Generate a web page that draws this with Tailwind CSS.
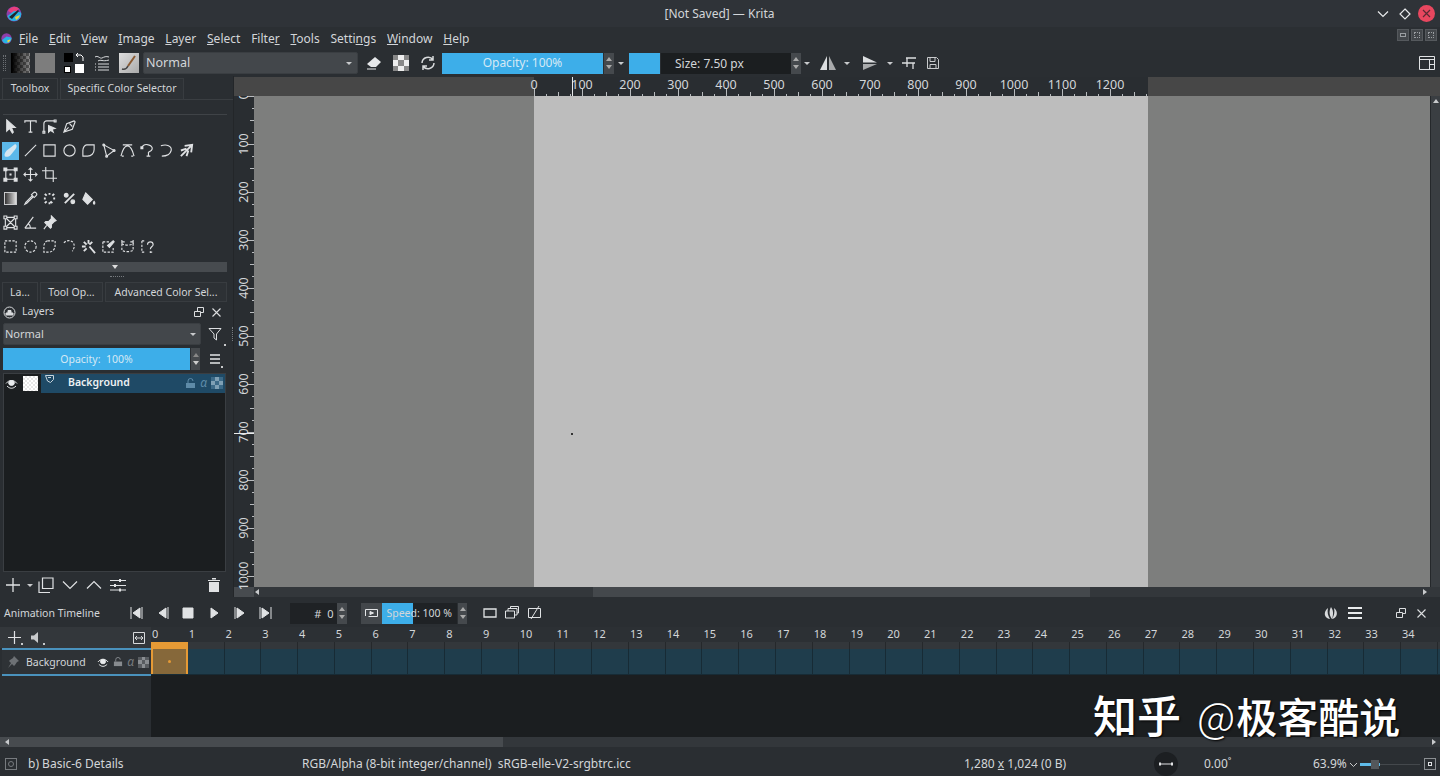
<!DOCTYPE html>
<html lang="en">
  <head>
    <meta charset="UTF-8" />
    <title>[Not Saved] — Krita</title>
    <script src="https://cdn.jsdelivr.net/npm/@tailwindcss/browser@4"></script>
  </head>
  <body class="h-screen w-[1440px] overflow-hidden flex flex-col bg-[#2a2e32] text-[#d3d6d9] font-['Noto_Sans','Noto_Sans_CJK_SC',sans-serif] relative">
    <!-- title bar -->
    <header class="h-[27px] shrink-0 bg-[#2f3338] flex items-center relative">
      <svg class="ml-[6px] size-[16px]" viewBox="0 0 16 16">
        <circle cx="8" cy="8" r="7.5" fill="#8e3fa8" />
        <path d="M2 5a7 7 0 0 1 11-2.500L8 8z" fill="#e83f7d" />
        <path d="M1.500 10 8 5l7 1.500A7 7 0 0 1 8 15a7 7 0 0 1-6.500-5z" fill="#27b4e4" />
        <path d="M3 11 12 4l1 1-7 8z" fill="#20262b" />
        <path d="M9 11l5-2a7 7 0 0 1-4 5z" fill="#f2d53c" />
      </svg>
      <div class="absolute inset-x-0 text-center text-[12px] leading-[28px] pr-[1px]">[Not Saved] — Krita</div>
      <div class="ml-auto flex items-center">
        <svg class="size-[12px]" viewBox="0 0 12 12" fill="none" stroke="#e8eaec" stroke-width="1.200"><path d="M1 3.500 6 8.500 11 3.500" /></svg>
        <svg class="ml-[10px] size-[12px]" viewBox="0 0 12 12" fill="none" stroke="#e8eaec" stroke-width="1.200"><path d="M6 1 11 6 6 11 1 6z" /></svg>
        <div class="ml-[7px] mr-[5px] size-[17px] rounded-full bg-[#e8475f] flex items-center justify-center">
          <svg class="size-[9px]" viewBox="0 0 9 9" stroke="#5b2a33" stroke-width="1.200"><path d="M1 1 8 8M8 1 1 8" /></svg>
        </div>
      </div>
    </header>

    <!-- menu bar -->
    <nav class="h-[23px] shrink-0 bg-[#2b2f33] flex items-center text-[12px] relative">
      <svg class="ml-[1px] size-[11px]" viewBox="0 0 16 16">
        <circle cx="8" cy="8" r="7.500" fill="#8e3fa8" />
        <path d="M1.500 10 8 5l7 1.500A7 7 0 0 1 8 15a7 7 0 0 1-6.500-5z" fill="#27b4e4" />
        <path d="M9 11l5-2a7 7 0 0 1-4 5z" fill="#f2d53c" />
      </svg>
      <div class="ml-[7px] flex gap-[10.800px]">
        <span><u>F</u>ile</span><span><u>E</u>dit</span><span><u>V</u>iew</span><span><u>I</u>mage</span><span><u>L</u>ayer</span><span><u>S</u>elect</span><span>Filte<u>r</u></span><span><u>T</u>ools</span><span>Setti<u>n</u>gs</span><span><u>W</u>indow</span><span><u>H</u>elp</span>
      </div>
      <div class="absolute right-[3px] top-[2px] flex gap-[2px]">
        <div class="size-[12px] bg-[#43474b] border border-[#55595d] flex items-center justify-center"><div class="w-[6px] h-[4px] border border-[#9a9ea2]"></div></div>
        <div class="size-[12px] bg-[#43474b] border border-[#55595d] flex items-center justify-center"><div class="size-[6px] border border-dotted border-[#9a9ea2]"></div></div>
        <div class="size-[12px] bg-[#43474b] border border-[#55595d] flex items-center justify-center"><div class="size-[6px] border border-dotted border-[#9a9ea2]"></div></div>
      </div>
    </nav>

    <!-- brush toolbar -->
    <div class="h-[26px] shrink-0 bg-[#2a2e32] flex items-center text-[12px]">
      <div class="ml-[3px] w-[3px] h-[16px] border-x border-dotted border-[#6b6f73]"></div>
      <div class="ml-[5px] w-[19px] h-[20px] bg-[linear-gradient(90deg,#000_5%,transparent),repeating-conic-gradient(#555_0_25%,#8a8a8a_0_50%)] bg-[length:auto,6px_6px]"></div>
      <div class="ml-[5px] w-[20px] h-[20px] bg-[#7d7d7d]"></div>
      <div class="ml-[9px] relative w-[20px] h-[20px]">
        <div class="absolute left-0 top-0 size-[9px] bg-black"></div>
        <div class="absolute right-0 bottom-0 size-[9px] bg-white"></div>
        <div class="absolute left-0 bottom-0 size-[7px] bg-white border border-black"></div>
        <svg class="absolute right-0 top-0 size-[9px]" viewBox="0 0 9 9" fill="none" stroke="#fff"><path d="M1 2h5l2 2v4M3 0 1 2l2 2" /></svg>
      </div>
      <svg class="ml-[10px] size-[16px]" viewBox="0 0 16 16" fill="none" stroke="#d8dadc"><path d="M1 2c3-2 5 2 7 1s4-2 7-1M4 6c3-2 4 1 11-1M1 9h1M4 9h11M1 12h1M4 12h11M1 15h1M4 15h11" /></svg>
      <div class="ml-[9px] w-[20px] h-[20px] bg-[linear-gradient(135deg,#ddd,#aaa)] flex items-center justify-center">
        <svg class="size-[18px]" viewBox="0 0 18 18" fill="none"><path d="M15 2 8 12" stroke="#8a5a32" stroke-width="2" /><path d="M2 15c3 1 5-1 6-3" stroke="#444" stroke-width="1.500" /></svg>
      </div>
      <div class="ml-[4px] w-[215px] h-[22px] rounded-[2px] bg-[#43474b] border border-[#3a3e42] flex items-center px-[2px] text-[12.500px]">
        <span>Normal</span>
        <svg class="ml-auto mr-[2px] size-[8px]" viewBox="0 0 8 8" fill="#c8cacc"><path d="M1 3h6L4 6z" /></svg>
      </div>
      <svg class="ml-[8px] size-[16px]" viewBox="0 0 16 16" fill="#e6e8ea"><path d="M9 2 15 7 10 12H5L1 9z" /><path d="M1 14h9" stroke="#e6e8ea" /></svg>
      <div class="ml-[11px] size-[16px] grid grid-cols-3 grid-rows-3">
        <i class="bg-[#888]"></i><i class="bg-[#eee]"></i><i class="bg-[#888]"></i><i class="bg-[#eee]"></i><i class="bg-[#888]"></i><i class="bg-[#eee]"></i><i class="bg-[#888]"></i><i class="bg-[#eee]"></i><i class="bg-[#888]"></i>
      </div>
      <svg class="ml-[11px] size-[16px]" viewBox="0 0 16 16" fill="none" stroke="#d8dadc" stroke-width="1.500"><path d="M2 8a6 6 0 0 1 11-3M14 8a6 6 0 0 1-11 3M13 1v4H9M3 15v-4h4" /></svg>
      <div class="ml-[6px] w-[161px] h-[21px] bg-[#3daee9] flex items-center justify-center text-[#d5e9f5]">Opacity: 100%</div>
      <div class="ml-[1px] w-[10px] h-[21px] bg-[#45494d] flex flex-col justify-center items-center gap-[2px]">
        <svg class="size-[6px]" viewBox="0 0 6 6" fill="#aaa"><path d="M3 1 6 5H0z" /></svg>
        <svg class="size-[6px]" viewBox="0 0 6 6" fill="#aaa"><path d="M3 5 6 1H0z" /></svg>
      </div>
      <svg class="ml-[4px] size-[6px]" viewBox="0 0 6 6" fill="#c8cacc"><path d="M0 2h6L3 5z" /></svg>
      <div class="ml-[5px] w-[31px] h-[21px] bg-[#3daee9]"></div>
      <div class="ml-[1px] w-[130px] h-[21px] bg-[#1b1e20] pl-[14px] leading-[21px]">Size: 7.50 px</div>
      <div class="w-[10px] h-[21px] bg-[#45494d] flex flex-col justify-center items-center gap-[2px]">
        <svg class="size-[6px]" viewBox="0 0 6 6" fill="#aaa"><path d="M3 1 6 5H0z" /></svg>
        <svg class="size-[6px]" viewBox="0 0 6 6" fill="#aaa"><path d="M3 5 6 1H0z" /></svg>
      </div>
      <svg class="ml-[3px] size-[6px]" viewBox="0 0 6 6" fill="#c8cacc"><path d="M0 2h6L3 5z" /></svg>
      <svg class="ml-[10px] size-[16px]" viewBox="0 0 16 16" fill="#dcdee0"><path d="M7 1v14H0z" /><path d="M9 1v14h7z" fill="#a8aaac" /></svg>
      <svg class="ml-[8px] size-[6px]" viewBox="0 0 6 6" fill="#c8cacc"><path d="M0 2h6L3 5z" /></svg>
      <svg class="ml-[12px] size-[16px]" viewBox="0 0 16 16" fill="#dcdee0"><path d="M1 1v6.500h14z" /><path d="M1 9v6l14-6z" fill="#a8aaac" /></svg>
      <svg class="ml-[9px] size-[6px]" viewBox="0 0 6 6" fill="#c8cacc"><path d="M0 2h6L3 5z" /></svg>
      <svg class="ml-[8px] size-[16px]" viewBox="0 0 16 16" fill="none" stroke="#dcdee0" stroke-width="1.300"><path d="M5 3h10M6 3v9M1 8h13M12 8v6" /></svg>
      <svg class="ml-[9px] size-[14px]" viewBox="0 0 14 14" fill="none" stroke="#c8cacc"><path d="M1.500 1.500h9l2 2v9h-11zM4 1.500v4h5v-4M4 12.500v-4h6v4" /></svg>
      <svg class="ml-auto mr-[5px] size-[16px]" viewBox="0 0 16 16" fill="none" stroke="#e0e2e4"><path d="M.5 1.500h15v13H.5zM.5 4.500h15M10.500 4.500v10M10.500 9.500h5" /></svg>
    </div>

    <!-- middle: dockers + canvas -->
    <main class="flex-1 min-h-0 flex">
      <aside class="w-[234px] shrink-0 flex flex-col text-[10.500px] border-r border-[#232629]">
        <div class="h-[24px] pt-[2px] pl-[2px] flex border-b border-[#3a3e42]">
          <div class="w-[56px] border border-b-0 border-[#383c40] text-center leading-[18px]">Toolbox</div>
          <div class="ml-[2px] w-[124px] h-[22px] border border-[#383c40] bg-[#2d3135] text-center leading-[18px]">Specific Color Selector</div>
        </div>
        <div class="mx-[3px] h-[15px] w-[224px] border-b border-[#3f4347]"></div>
        <div id="toolbox" class="h-[147px] ml-[1px] flex flex-col"></div>
        <div class="mx-[2px] w-[225px] h-[10px] bg-[#474b4f] flex items-center justify-center">
          <svg class="size-[6px]" viewBox="0 0 6 6" fill="#ddd"><path d="M0 1h6L3 5z" /></svg>
        </div>
        <div class="h-[10px] flex justify-center items-center"><div class="w-[14px] border-t border-dotted border-[#777b7f]"></div></div>

        <div class="h-[20px] pl-[2px] flex">
          <div class="w-[36px] border border-b-0 border-[#383c40] text-center leading-[18px]">La...</div>
          <div class="ml-[2px] w-[63px] border border-[#383c40] bg-[#2d3135] text-center leading-[18px]">Tool Op...</div>
          <div class="ml-[2px] w-[122px] border border-[#383c40] bg-[#2d3135] text-center leading-[18px]">Advanced Color Sel...</div>
        </div>
        <div class="h-[20px] flex items-center pt-[1px]">
          <svg class="ml-[3px] size-[13px]" viewBox="0 0 13 13" fill="none" stroke="#d8dadc"><circle cx="6.500" cy="6.500" r="5.500" /><path d="M3 9h7V7H3zM5 7V4.500h3V7" fill="#d8dadc" /></svg>
          <span class="ml-[6px] text-[10.500px]">Layers</span>
          <svg class="ml-auto size-[12px]" viewBox="0 0 12 12" fill="none" stroke="#dcdee0"><path d="M1.500 5.500h6v5h-6zM4.500 5.500v-4h6v5h-3" /></svg>
          <svg class="ml-[6px] mr-[11px] size-[11px]" viewBox="0 0 11 11" stroke="#dcdee0" stroke-width="1.100"><path d="M1.500 1.500 9.500 9.500M9.500 1.500 1.500 9.500" /></svg>
        </div>
        <div class="mt-[1px] h-[23px] flex items-center">
          <div class="ml-[3px] w-[198px] h-[22px] rounded-[2px] bg-[#43474b] border border-[#3a3e42] flex items-center px-[1px] text-[11px]">
            <span>Normal</span>
            <svg class="ml-auto mr-[2px] size-[8px]" viewBox="0 0 8 8" fill="#c8cacc"><path d="M1 3h6L4 6z" /></svg>
          </div>
          <svg class="ml-[7px] size-[15px]" viewBox="0 0 15 15" fill="none" stroke="#dcdee0"><path d="M1 1.500h12L8.500 7v6L6 11V7z" /></svg>
          <div class="ml-[1px] self-end size-[2px] bg-[#c8cacc]"></div>
          <div class="ml-[6px] h-[14px] border-l border-dotted border-[#777b7f]"></div>
        </div>
        <div class="mt-[2px] h-[22px] flex items-center">
          <div class="ml-[3px] w-[187px] h-[22px] bg-[#3daee9] text-center leading-[22px] text-[#d5e9f5]">Opacity:&nbsp; 100%</div>
          <div class="ml-[1px] w-[9px] h-[22px] bg-[#45494d] flex flex-col justify-center items-center gap-[2px]">
            <svg class="size-[6px]" viewBox="0 0 6 6" fill="#888"><path d="M3 1 6 5H0z" /></svg>
            <svg class="size-[6px]" viewBox="0 0 6 6" fill="#ccc"><path d="M3 5 6 1H0z" /></svg>
          </div>
          <svg class="ml-[9px] size-[12px]" viewBox="0 0 12 12" stroke="#e4e6e8" stroke-width="1.500"><path d="M1 2h10M1 6h10M1 10h10" /></svg>
          <div class="self-end mb-[2px] size-[2px] bg-[#c8cacc]"></div>
        </div>
        <div class="mt-[3px] ml-[3px] w-[223px] h-[200px] bg-[#1b1e20] border border-[#3a3e42]">
          <div class="h-[19px] bg-[#1f4a66] flex items-center">
            <div class="w-[37px] h-full bg-[#1b1e20] flex items-center">
              <svg class="ml-[1px] size-[13px]" viewBox="0 0 13 13" fill="none" stroke="#e8eaec"><path d="M1 6.500c3-4 8-4 11 0" /><ellipse cx="6.500" cy="6" rx="2.800" ry="2.400" fill="#e8eaec" /><path d="M2 9c3 3 6 3 9 0" /></svg>
              <div class="ml-[5px] size-[15px] bg-[repeating-conic-gradient(#e6e6e6_0_25%,#fff_0_50%)] bg-[length:4px_4px]"></div>
            </div>
            <svg class="ml-[3px] size-[11px] self-start" viewBox="0 0 11 11" fill="none" stroke="#c8d4dc"><path d="M1.500 1.500h8v4l-3 3-3-1.500zM4 3.500h3" /></svg>
            <span class="ml-[13px] text-[10.500px] font-semibold text-[#eef1f3]">Background</span>
            <svg class="ml-auto size-[11px]" viewBox="0 0 11 11" fill="#5e8ba8"><path d="M1 5h9v5H1z" /><path d="M3 5V3a2.500 2.500 0 0 1 5 0" fill="none" stroke="#5e8ba8" /></svg>
            <span class="ml-[4px] text-[12px] italic text-[#5e8ba8] leading-none">α</span>
            <div class="ml-[4px] mr-[2px] size-[12px] grid grid-cols-3 grid-rows-3 bg-[#3c6a88]"><i></i><i class="bg-[#7fa0b5]"></i><i></i><i class="bg-[#7fa0b5]"></i><i></i><i class="bg-[#7fa0b5]"></i><i></i><i class="bg-[#7fa0b5]"></i><i></i></div>
          </div>
        </div>
        <div class="h-[24px] flex items-center mt-[1px]">
          <svg class="ml-[5px] size-[16px]" viewBox="0 0 16 16" stroke="#e0e2e4" stroke-width="1.300"><path d="M8 1v14M1 8h14" /></svg>
          <svg class="ml-[6px] size-[6px]" viewBox="0 0 6 6" fill="#c8cacc"><path d="M0 2h6L3 5z" /></svg>
          <svg class="ml-[5px] size-[16px]" viewBox="0 0 16 16" fill="none" stroke="#e0e2e4" stroke-width="1.200"><path d="M1 4.500v11h11M4.500 1h10.500v10.500H4.500z" /></svg>
          <svg class="ml-[8px] size-[16px]" viewBox="0 0 16 16" fill="none" stroke="#e0e2e4" stroke-width="1.200"><path d="M1 4.500 8 11.500 15 4.500" /></svg>
          <svg class="ml-[8px] size-[16px]" viewBox="0 0 16 16" fill="none" stroke="#e0e2e4" stroke-width="1.200"><path d="M1 11.500 8 4.500 15 11.500" /></svg>
          <svg class="ml-[8px] size-[16px]" viewBox="0 0 16 16" fill="none" stroke="#e0e2e4"><path d="M0 3.500h16M0 8.500h16M0 13h16" /><path d="M10 2v3M5 7v3M10 11.500v3" stroke-width="2" /></svg>
          <svg class="ml-auto mr-[11px] size-[16px]" viewBox="0 0 16 16" fill="#e0e2e4"><path d="M3 5h10v10H3zM2 3h12v1H2zM6 1h4v1.500H6z" /></svg>
        </div>
      </aside>

      <section class="flex-1 min-w-0 flex flex-col">
        <div class="h-[19px] mt-[1px] shrink-0 bg-[#474747] flex pl-[300px] relative z-10">
          <div id="ruler-h" class="relative w-[614px] h-full bg-[#292d31] text-[12.500px]"></div>
        </div>
        <div class="flex-1 min-h-0 flex">
          <div id="ruler-v" class="relative z-[5] w-[20px] shrink-0 bg-[#292d31] text-[12.500px]"></div>
          <div class="flex-1 bg-[#7d7e7d] pl-[280px] relative">
            <div class="w-[614px] h-full bg-[#bdbdbd] relative">
              <div class="absolute left-[37px] top-[337px] size-[2px] bg-[#333]"></div>
            </div>
          </div>
          <div class="w-[10px] shrink-0 bg-[#3a3e42] border-l border-[#25282b] flex justify-center pt-[2px]">
            <svg class="size-[6px]" viewBox="0 0 6 6" fill="#c8cacc"><path d="M3 1 6 5H0z" /></svg>
          </div>
        </div>
        <div class="h-[10px] shrink-0 bg-[#33373b] flex items-center">
          <div class="w-[20px] h-full bg-[#474b4f] flex items-center justify-end">
            <svg class="size-[6px] -mr-[6px]" viewBox="0 0 6 6" fill="#c8cacc"><path d="M1 3 5 0v6z" /></svg>
          </div>
          <div class="ml-[339px] w-[497px] h-full bg-[#44484c]"></div>
          <svg class="ml-auto mr-[12px] size-[6px]" viewBox="0 0 6 6" fill="#c8cacc"><path d="M5 3 1 0v6z" /></svg>
        </div>
      </section>
    </main>

    <!-- animation timeline -->
    <section class="h-[155px] shrink-0 flex flex-col relative text-[10.500px]">
      <div class="h-[30px] flex items-center pt-[2px]">
        <span class="ml-[4px] w-[125px] pt-[1px]">Animation Timeline</span>
        <div id="transport" class="flex items-center gap-[9.700px]"></div>
        <div class="ml-[17px] w-[47px] h-[21px] bg-[#1f2225] text-right pr-[4px] leading-[21px] text-[11px]">#&nbsp; 0</div>
        <div class="w-[10px] h-[21px] bg-[#45494d] flex flex-col justify-center items-center gap-[2px]">
          <svg class="size-[6px]" viewBox="0 0 6 6" fill="#aaa"><path d="M3 1 6 5H0z" /></svg>
          <svg class="size-[6px]" viewBox="0 0 6 6" fill="#aaa"><path d="M3 5 6 1H0z" /></svg>
        </div>
        <div class="ml-[14px] w-[21px] h-[21px] bg-[#43474b] flex items-center justify-center">
          <svg class="size-[15px]" viewBox="0 0 15 15" fill="none" stroke="#e4e6e8"><path d="M1.500 3.500h12v7h-9M1.500 3.500V10" /><path d="M6 5.500 9.500 7 6 8.500z" fill="#e4e6e8" /></svg>
        </div>
        <div class="w-[75px] h-[21px] bg-[#1f2225] relative leading-[21px]">
          <div class="absolute inset-y-0 left-0 w-[31px] bg-[#3daee9]"></div>
          <span class="relative pl-[4px] whitespace-nowrap">Speed: 100 %</span>
        </div>
        <div class="ml-[1px] w-[9px] h-[21px] bg-[#45494d] flex flex-col justify-center items-center gap-[2px]">
          <svg class="size-[6px]" viewBox="0 0 6 6" fill="#aaa"><path d="M3 1 6 5H0z" /></svg>
          <svg class="size-[6px]" viewBox="0 0 6 6" fill="#aaa"><path d="M3 5 6 1H0z" /></svg>
        </div>
        <svg class="ml-[16px] size-[14px]" viewBox="0 0 14 14" fill="none" stroke="#e0e2e4" stroke-width="1.300"><path d="M1 3h12v8H1z" /></svg>
        <svg class="ml-[7px] size-[16px]" viewBox="0 0 16 16" fill="none" stroke="#e0e2e4"><path d="M1.500 6h9v7h-9zM4 6V3.500h9V10h-2.500M6.500 3.500V1.500h8V8H13" /></svg>
        <svg class="ml-[7px] size-[16px]" viewBox="0 0 16 16" fill="none" stroke="#e0e2e4"><path d="M1.500 3.500h12v9h-12zM4 14 12 1" /></svg>
        <svg class="ml-auto size-[16px]" viewBox="0 0 16 16" fill="#d8dadc"><path d="M8 2c2 3 3 6 1 12-3-4-3-8-1-12zM5 3c-1 4 0 8 2 11-6-1-7-7-2-11zM11 3c5 4 3 10-2 11 2-3 3-7 2-11z" /></svg>
        <svg class="ml-[8px] size-[16px]" viewBox="0 0 16 16" stroke="#e8eaec" stroke-width="1.800"><path d="M1 3h14M1 8h14M1 13h14" /></svg>
        <svg class="ml-[32px] size-[12px]" viewBox="0 0 12 12" fill="none" stroke="#dcdee0"><path d="M1.500 5.500h6v5h-6zM4.500 5.500v-4h6v5h-3" /></svg>
        <svg class="ml-[9px] mr-[13px] size-[11px]" viewBox="0 0 11 11" stroke="#dcdee0" stroke-width="1.100"><path d="M1.500 1.500 9.500 9.500M9.500 1.500 1.500 9.500" /></svg>
      </div>

      <div class="flex h-[110px]">
        <div class="w-[151px] shrink-0 flex flex-col">
          <div class="h-[21px] bg-[#33373b] flex items-center">
            <svg class="ml-[8px] size-[13px]" viewBox="0 0 13 13" stroke="#e0e2e4" stroke-width="1.200"><path d="M6.500 0v13M0 6.500h13" /></svg>
            <div class="self-end mb-[3px] size-[2px] bg-[#c8cacc]"></div>
            <svg class="ml-[7px] size-[13px]" viewBox="0 0 13 13" fill="#c8cacc"><path d="M1 4.500h3L8 1v11L4 8.500H1z" /></svg>
            <div class="self-end mb-[3px] size-[2px] bg-[#c8cacc]"></div>
            <svg class="ml-auto mr-[5px] size-[14px]" viewBox="0 0 14 14" fill="none" stroke="#d8dadc"><path d="M1.500 1.500h11v11h-11zM3 7h8M5 5 3 7l2 2M9 5l2 2-2 2" /></svg>
          </div>
          <div class="h-[28px] ml-[2px] border-y-2 border-[#4a92bd] bg-[#2e3236] flex items-center">
            <svg class="ml-[4px] size-[14px]" viewBox="0 0 14 14" fill="#6d7175"><path d="M8 1l5 5-2 1-2 3-1 1-2-2-4 4 3-5-2-2 1-1 3-2z" /></svg>
            <span class="ml-[6px] pt-[1px]">Background</span>
            <svg class="ml-auto size-[12px]" viewBox="0 0 13 13" fill="none" stroke="#e8eaec"><path d="M1 6.500c3-4 8-4 11 0" /><ellipse cx="6.500" cy="6" rx="2.800" ry="2.400" fill="#e8eaec" /><path d="M2 9c3 3 6 3 9 0" /></svg>
            <svg class="ml-[4px] size-[10px]" viewBox="0 0 11 11" fill="#878b8f"><path d="M1 5h9v5H1z" /><path d="M3 5V3a2.500 2.500 0 0 1 5 0" fill="none" stroke="#878b8f" /></svg>
            <span class="ml-[4px] text-[12px] italic text-[#777b7f] leading-none">α</span>
            <div class="ml-[4px] mr-[2px] size-[11px] grid grid-cols-3 grid-rows-3 bg-[#585c60]"><i></i><i class="bg-[#8a8e92]"></i><i></i><i class="bg-[#8a8e92]"></i><i></i><i class="bg-[#8a8e92]"></i><i></i><i class="bg-[#8a8e92]"></i><i></i></div>
          </div>
          <div class="flex-1"></div>
        </div>
        <div class="flex-1 min-w-0 bg-[#1b1e20] flex flex-col overflow-hidden">
          <div id="frame-nums" class="h-[15px] bg-[#2c3034] flex"></div>
          <div id="frame-sub" class="h-[7px] bg-[#33373b] flex"></div>
          <div id="frame-track" class="h-[26px] bg-[#1f3d4c] flex border-b border-[#172b35]"></div>
        </div>
      </div>

      <div class="h-[10px] bg-[#33373b] flex items-center">
        <div class="w-[503px] h-full bg-[#474b4f] flex items-center pl-[4px]">
          <svg class="size-[6px]" viewBox="0 0 6 6" fill="#c8cacc"><path d="M1 3 5 0v6z" /></svg>
        </div>
        <svg class="ml-auto mr-[3px] size-[6px]" viewBox="0 0 6 6" fill="#c8cacc"><path d="M5 3 1 0v6z" /></svg>
      </div>
      <div class="h-[5px]"></div>
    </section>

    <!-- status bar -->
    <footer class="h-[24px] shrink-0 flex items-center text-[12px]">
      <div class="ml-[5px] size-[12px] border border-[#777b7f] flex items-center justify-center"><div class="size-[6px] rounded-full border border-[#777b7f]"></div></div>
      <span class="ml-[11px] w-[274px]">b) Basic-6 Details</span>
      <span class="whitespace-nowrap">RGB/Alpha (8-bit integer/channel)&nbsp; sRGB-elle-V2-srgbtrc.icc</span>
      <span class="absolute left-[964px] whitespace-nowrap">1,280 <u>x</u> 1,024 (0 B)</span>
      <div class="absolute left-[1154px] size-[24px] rounded-full bg-[#1c1f22] flex items-center justify-center">
        <svg class="size-[14px]" viewBox="0 0 14 14" stroke="#e0e2e4"><path d="M1 7h12" /><path d="M0 7h2M12 7h2" stroke-width="3" /></svg>
      </div>
      <span class="absolute left-[1204px]">0.00˚</span>
      <span class="absolute left-[1313px]">63.9%</span>
      <svg class="absolute left-[1349px] size-[9px]" viewBox="0 0 9 9" fill="none" stroke="#c8cacc"><path d="M1 3 4.500 6.500 8 3" /></svg>
      <div class="absolute left-[1360px] w-[20px] h-[3px] bg-[#5fbbe9]"></div>
      <div class="absolute left-[1371px] w-[8px] h-[9px] bg-[#53575b]"></div>
      <div class="absolute left-[1380px] w-[40px] h-[1px] bg-[#44484c]"></div>
      <div class="absolute left-[1424px] size-[12px] border border-[#8a8e92] flex items-center justify-center"><div class="size-[4px] border border-[#e0e2e4]"></div></div>
    </footer>

    <!-- watermark over the timeline -->
    <div class="absolute left-[1093px] top-[687px] leading-[54px] text-white whitespace-nowrap [text-shadow:1px_1px_2px_#000] font-['Noto_Sans_CJK_SC',sans-serif]">
      <span class="text-[44px] font-medium">知乎</span><span class="ml-[16px] text-[42px] font-light">@</span><span class="ml-[1px] text-[41px] font-medium">极客酷说</span>
    </div>

    <script>
      // tool icons, one row per group of the toolbox
      const s = (inner) => `<svg class="size-[15px]" viewBox="0 0 16 16" fill="none" stroke="#dfe1e3" stroke-width="1.200">${inner}</svg>`;
      const dashed = (inner) => s(`<g stroke-dasharray="2.500 1.500">${inner}</g>`);
      const toolRows = [
        [
          s('<path d="M4 1v12l3-3 3 5 1-1-2-5h4z" fill="#dfe1e3"/>'),
          s('<path d="M2 4V2h12v2M8 2v12M6 14h4"/>'),
          s('<path d="M2 13V5a3 3 0 0 1 3-3h8"/><path d="M7 7v7l2-2 3 2-1-3 3-1z" fill="#dfe1e3"/><path d="M1 13h2v2H1zM13 1h2v2h-2z"/>'),
          s('<path d="M13 2 5 5 2 14l9-3 3-8zM2 14l5-5M8 5l3 3"/>')
        ],
        [
          `<div class="w-[17px] h-[18px] -ml-[1px] bg-[#5bb8ea] flex items-center justify-center"><svg class="size-[15px]" viewBox="0 0 16 16" fill="#d5e6f0"><path d="M13 1c2 1 2 3 0 6l-5 6c-2 2-5 2-6 1s0-4 2-6z"/></svg></div>`,
          s('<path d="M2 14 14 2"/>'),
          s('<path d="M2 2h12v12H2z"/>'),
          s('<circle cx="8" cy="8" r="6"/>'),
          s('<path d="M6 2h8v5c0 4-3 7-7 7H2V8c0-3 2-6 4-6z"/>'),
          s('<path d="M3 2 14 8 6 14 3 2zM3 2v0"/><circle cx="3" cy="2" r="1"/><circle cx="14" cy="8" r="1"/><circle cx="6" cy="14" r="1"/>'),
          s('<path d="M1 14C3 6 5 3 8 3s5 3 7 11M3 2h10M2 14h2M12 14h2"/>'),
          s('<path d="M1 6C3 2 6 1 9 2c4 1 5 4 3 6l-3 2v4M7 14h4M1 4h2v2H1z"/>'),
          s('<path d="M2 3c6-2 12 0 11 5-1 4-5 6-10 6"/>'),
          s('<path d="M2 14 14 2M6 3l8-1-1 8M2 8l6-2M8 14l2-6" stroke-width="2"/>')
        ],
        [
          s('<path d="M3 3h10v10H3z"/><path d="M1 1h3v3H1zM12 1h3v3h-3zM1 12h3v3H1zM12 12h3v3h-3zM7.500 7.500h1v1h-1z" fill="#dfe1e3"/>'),
          s('<path d="M8 1v14M1 8h14M6 3l2-2 2 2M6 13l2 2 2-2M3 6 1 8l2 2M13 6l2 2-2 2"/>'),
          s('<path d="M4 0v12h12M0 4h12v12"/>')
        ],
        [
          `<div class="size-[13px] border border-[#c8cacc] bg-[linear-gradient(90deg,#333,#ddd)]"></div>`,
          s('<path d="M14 2c-1-1-2-1-3 0L9 4 12 7l2-2c1-1 1-2 0-3zM10 5 3 12l-1 2 2-1 7-7z"/>'),
          s('<path d="M8 2v2M13 3l-2 2M14 8h-2M4 8H2M3 13l2-2M11 13l-2-2M8 14v-2M3 3l2 2" stroke-width="2"/>'),
          s('<path d="M3 13 13 3" stroke-width="2"/><circle cx="4.500" cy="4.500" r="2" fill="#dfe1e3"/><circle cx="11.500" cy="11.500" r="2" fill="#dfe1e3"/>'),
          s('<path d="M5 2 12 9 7 14 2 9zM3 8h8" fill="#dfe1e3"/><path d="M14 11c1 1 1 3 0 3s-1-2 0-3z" fill="#dfe1e3"/>')
        ],
        [
          s('<path d="M1 1h3v3H1zM12 1h3v3h-3zM1 12h3v3H1zM12 12h3v3h-3zM4 4l8 8M12 4l-8 8M4 2.500h8M4 13.500h8M2.500 4v8M13.500 4v8"/>'),
          s('<path d="M2 14 11 2M2 14h12M8 14c0-2-1-4-2.500-5"/>'),
          s('<path d="M10 1l5 5-2 1-3 3v3l-1 1-6-6 1-1h3l3-3z" fill="#dfe1e3"/><path d="M5 11l-3 4"/>')
        ],
        [
          dashed('<path d="M2 2h12v12H2z"/>'),
          dashed('<circle cx="8" cy="8" r="6"/>'),
          dashed('<path d="M6 2h8v5c0 4-3 7-7 7H2V8c0-3 2-6 4-6z"/>'),
          dashed('<path d="M2 4c3-3 8-3 10 0s1 6-1 9"/>'),
          s('<path d="M9 8l6 7M8 1v4M3 3l3 3M1 8h4M12 3 9 6M3 13l3-3" stroke-width="2"/>'),
          dashed('<path d="M2 3h8M2 3v11h11V8"/>').replace('</svg>', '<path d="M9 9l5-6-1-1-6 5z" fill="#dfe1e3"/></svg>'),
          dashed('<path d="M2 5c3 2 9 2 12 0v7c-3 2-9 2-12 0z"/>').replace('</svg>', '<path d="M2 1v4M14 1v4M2 3h3M11 3h3"/></svg>'),
          dashed('<path d="M2 2h4M2 2v12h4M13 14h-2"/>').replace('</svg>', '<path d="M8 6c0-4 6-4 6 0 0 2-3 2-3 5M11 13v2"/></svg>')
        ]
      ];
      document.getElementById("toolbox").innerHTML = toolRows.map((row) =>
        `<div class="h-[24px] flex items-center">${row.map((icon) =>
          `<div class="w-[19.500px] flex items-center justify-center shrink-0">${icon}</div>`).join("")}</div>`).join("");

      // transport buttons of the timeline
      const t = (inner) => `<svg class="size-[16px]" viewBox="0 0 16 16" fill="#e0e2e4" stroke="#e0e2e4">${inner}</svg>`;
      document.getElementById("transport").innerHTML = [
        t('<path d="M2 2v12M13 2v12"/><path d="M11 3v10L4 8z"/>'),
        t('<path d="M13 2v12"/><path d="M11 3v10L4 8z"/>'),
        t('<path d="M3 3h10v10H3z"/>'),
        t('<path d="M5 3v10l7-5z"/>'),
        t('<path d="M3 2v12"/><path d="M5 3v10l7-5z"/>'),
        t('<path d="M3 2v12M14 2v12"/><path d="M5 3v10l7-5z"/>')
      ].join("");

      // frame numbers and grid along the timeline, the last column has no label
      const FRAME_W = 36.78;
      const frames = Array.from({ length: 36 }, (_, i) => i);
      const cell = (html, cls) => `<div class="shrink-0 ${cls}" style="width:${FRAME_W}px">${html}</div>`;
      document.getElementById("frame-nums").innerHTML = frames.map((i) =>
        cell(i < 35 ? `<span class="pl-[1px]">${i}</span>` : "", "text-[11px] leading-[14px]")).join("");
      document.getElementById("frame-sub").innerHTML = frames.map((i) =>
        cell("", i === 0 ? "bg-[#e69a35]" : "border-r border-[#25282b]")).join("");
      document.getElementById("frame-track").innerHTML = frames.map((i) =>
        i === 0
          ? cell('<div class="size-[3px] bg-[#e69a35] rounded-full"></div>', "bg-[#86683a] border-x-2 border-[#e69a35] flex items-center justify-center")
          : cell("", "border-r border-[#172b35]")).join("");

      // rulers: 0.48 screen pixels per image pixel, a tick each 25 image pixels
      const rulerH = document.getElementById("ruler-h");
      const rulerV = document.getElementById("ruler-v");
      let h = "", v = "";
      for (let i = 0; i <= 51; i++) {
        const p = i * 12;
        const len = i % 4 === 0 ? 7 : i % 2 === 0 ? 4 : 2;
        h += `<div class="absolute bottom-0 w-[1px] bg-[#b8bbbe]" style="left:${p}px;height:${len}px"></div>`;
        if (i <= 40) v += `<div class="absolute right-0 h-[1px] bg-[#b8bbbe]" style="top:${p}px;width:${len}px"></div>`;
      }
      for (let n = 0; n <= 1200; n += 100) {
        const p = n * 0.48;
        h += `<span class="absolute top-0 leading-[16px] -translate-x-1/2" style="left:${p}px">${n}</span>`;
      }
      for (let n = 0; n <= 1000; n += 100) {
        const p = n * 0.48;
        v += `<span class="absolute left-[10px] leading-[16px] -translate-x-1/2 -translate-y-1/2 -rotate-90" style="top:${p}px">${n}</span>`;
      }
      h += '<div class="absolute left-[38px] inset-y-0 w-[1px] bg-[#e8eaec]"></div>';
      v += '<div class="absolute top-[337px] inset-x-0 h-[1px] bg-[#e8eaec]"></div>';
      rulerH.innerHTML = h;
      rulerV.innerHTML = v;
    </script>
  </body>
</html>
